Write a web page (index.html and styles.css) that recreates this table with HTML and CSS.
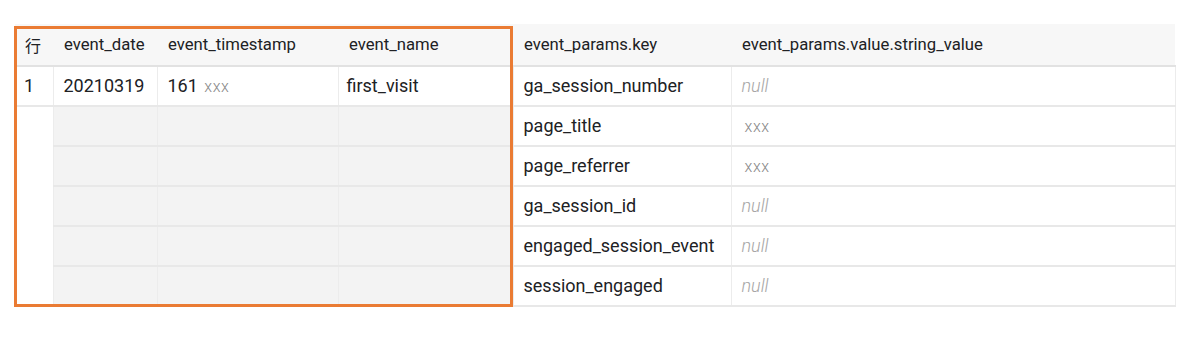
FILE: index.html
```html
<!DOCTYPE html>
<html lang="ja">
<head>
<meta charset="utf-8">
<link rel="stylesheet" href="styles.css">
</head>
<body>
<div class="wrap">
  <table class="grid">
    <colgroup>
      <col class="c-row"><col class="c-date"><col class="c-ts"><col class="c-name"><col class="c-key"><col class="c-val">
    </colgroup>
    <thead>
      <tr>
        <th class="rowhead">行</th>
        <th>event_date</th>
        <th>event_timestamp</th>
        <th class="namehead">event_name</th>
        <th>event_params.key</th>
        <th>event_params.value.string_value</th>
      </tr>
    </thead>
    <tbody>
      <tr>
        <td class="rownum">1</td>
        <td>20210319</td>
        <td>161 <span class="mask">xxx</span></td>
        <td class="name">first_visit</td>
        <td>ga_session_number</td>
        <td class="null">null</td>
      </tr>
      <tr>
        <td class="blank-row"></td><td class="empty"></td><td class="empty"></td><td class="empty"></td>
        <td>page_title</td>
        <td><span class="mask v">xxx</span></td>
      </tr>
      <tr>
        <td class="blank-row"></td><td class="empty"></td><td class="empty"></td><td class="empty"></td>
        <td>page_referrer</td>
        <td><span class="mask v">xxx</span></td>
      </tr>
      <tr>
        <td class="blank-row"></td><td class="empty"></td><td class="empty"></td><td class="empty"></td>
        <td>ga_session_id</td>
        <td class="null">null</td>
      </tr>
      <tr>
        <td class="blank-row"></td><td class="empty"></td><td class="empty"></td><td class="empty"></td>
        <td>engaged_session_event</td>
        <td class="null">null</td>
      </tr>
      <tr>
        <td class="blank-row"></td><td class="empty"></td><td class="empty"></td><td class="empty"></td>
        <td>session_engaged</td>
        <td class="null">null</td>
      </tr>
    </tbody>
  </table>
  <div class="highlight"></div>
</div>
</body>
</html>
```

FILE: styles.css
```css
html, body {
  margin: 0;
  padding: 0;
  background: #ffffff;
}

body {
  font-family: Roboto, "Noto Sans CJK JP", sans-serif;
  color: #202124;
}

.wrap {
  position: relative;
  padding: 24px 0 0 15px;
  width: 1160px;
}

.grid {
  border-collapse: collapse;
  table-layout: fixed;
  width: 1160px;
  font-size: 18px;
}

.c-row { width: 38px; }
.c-date { width: 104px; }
.c-ts { width: 181px; }
.c-name { width: 175px; }
.c-key { width: 218px; }
.c-val { width: 444px; }

.grid th {
  background: #f7f7f7;
  font-weight: 400;
  text-align: left;
  height: 41px;
  padding: 0 0 0 11px;
  border-bottom: 2px solid #e2e2e2;
  white-space: nowrap;
  font-size: 16.7px;
}

.grid th.rowhead {
  padding-left: 10px;
  font-size: 16px;
}

.grid th.namehead {
  padding-left: 11px;
}

.grid td {
  height: 38px;
  padding: 0 0 0 10px;
  border-bottom: 2px solid #e8e8e8;
  border-right: 1px solid #ececec;
  white-space: nowrap;
  vertical-align: middle;
  line-height: 20px;
}

.grid td.rownum {
  padding-left: 9px;
}

.grid td.name {
  padding-left: 8px;
}

.grid td.blank-row {
  border-bottom: none;
  border-right: 1px solid #ececec;
  background: #ffffff;
}

.grid td.empty {
  background: #f3f3f3;
}

.mask {
  color: #888888;
  font-size: 16px;
  font-weight: 300;
  letter-spacing: 0.6px;
  margin-left: 2px;
}

.mask.v {
  margin-left: 3px;
}

.null {
  color: #a6a6a6;
  font-style: italic;
  font-weight: 300;
}

.highlight {
  position: absolute;
  left: 14px;
  top: 26px;
  width: 493px;
  height: 275px;
  border: 3px solid #ea7b33;
  pointer-events: none;
}
```
